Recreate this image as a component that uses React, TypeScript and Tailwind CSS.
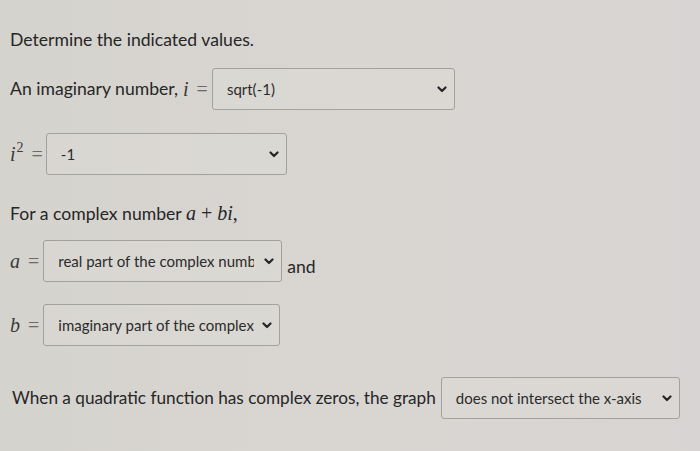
import type { ReactNode } from "react";

const SANS = "font-['Lato','Open_Sans',sans-serif]";
const MATH = "font-['Liberation_Serif','DejaVu_Serif',serif]";

function Chevron() {
  return (
    <svg width="10" height="7" viewBox="0 0 10 7" className="shrink-0">
      <polyline
        points="1.5,1.5 5,5 8.5,1.5"
        fill="none"
        stroke="#262626"
        strokeWidth="2.2"
        strokeLinecap="round"
        strokeLinejoin="round"
      />
    </svg>
  );
}

function Select({ value, width, textWidth }: { value: string; width: string; textWidth?: string }) {
  return (
    <div
      className={`flex h-[42px] ${width} shrink-0 items-center justify-between rounded-[3px] border border-[#a3a19d] bg-[#dedcd8]/40 pl-[14px] pr-[7px]`}
    >
      <span
        className={`overflow-hidden whitespace-nowrap text-[15px] leading-[20px] text-[#2b2b2b] ${textWidth ?? ""}`}
      >
        {value}
      </span>
      <Chevron />
    </div>
  );
}

function Eq({ children }: { children: ReactNode }) {
  return (
    <span className={`${MATH} flex items-center text-[20px] leading-none text-[#3a3a3a]`}>
      {children}
      <span className="ml-[8px] not-italic text-[#6a6a6a]">=</span>
    </span>
  );
}

export default function App() {
  return (
    <div
      className={`${SANS} h-[451px] w-[700px] overflow-hidden bg-gradient-to-r from-[#d5d3ce] via-[#d9d6d2] to-[#d8d4d3] text-[#262626]`}
    >
      <div className="flex flex-col px-[10px] pt-[28px]">
        <h1 className="h-[24px] text-[17.6px] leading-[24px]">Determine the indicated values.</h1>

        <div className="mt-[16px] flex items-center gap-[4px]">
          <span className="text-[17.6px]">An imaginary number,</span>
          <Eq>
            <i className="ml-[1px]">i</i>
          </Eq>
          <Select value="sqrt(-1)" width="w-[243px]" />
        </div>

        <div className="mt-[23px] flex items-center gap-[3px]">
          <Eq>
            <i>i</i>
            <span className="ml-[1px] -translate-y-[6px] text-[14px] not-italic">2</span>
          </Eq>
          <Select value="-1" width="w-[241px]" />
        </div>

        <p className="mt-[26px] h-[24px] text-[17.6px] leading-[24px]">
          For a complex number{" "}
          <span className={`${MATH} text-[20px]`}>
            <i>a</i> + <i>bi</i>,
          </span>
        </p>

        <div className="mt-[15px] flex items-center gap-[4px]">
          <Eq>
            <i>a</i>
          </Eq>
          <Select value="real part of the complex number" width="w-[239px]" textWidth="w-[196px]" />
          <span className="ml-[1px] mt-[12px] text-[17.6px]">and</span>
        </div>

        <div className="mt-[22px] flex items-center gap-[4px]">
          <Eq>
            <i>b</i>
          </Eq>
          <Select value="imaginary part of the complex" width="w-[237px]" />
        </div>

        <div className="mt-[31px] flex items-center gap-[5px] pl-[2px]">
          <span className="whitespace-nowrap text-[17.2px]">
            When a quadratic function has complex zeros, the graph
          </span>
          <Select value="does not intersect the x-axis" width="w-[239px]" />
        </div>
      </div>
    </div>
  );
}
